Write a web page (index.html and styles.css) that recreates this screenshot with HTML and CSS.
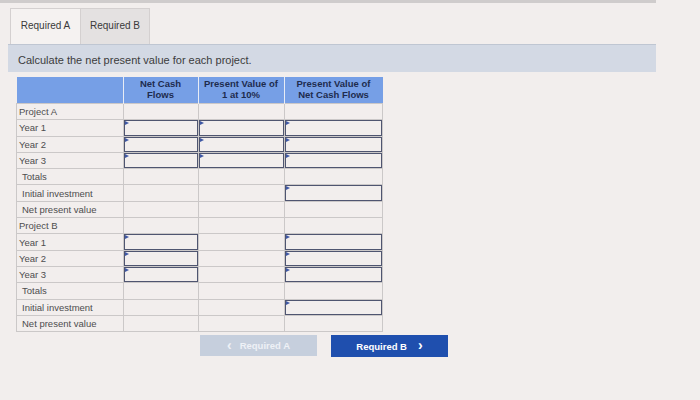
FILE: index.html
```html
<!DOCTYPE html>
<html>
<head>
<meta charset="utf-8">
<link rel="stylesheet" href="styles.css">
</head>
<body>
<div class="topbar"></div>
<div class="page">
  <div class="tabs">
    <div class="tab active">Required A</div>
    <div class="tab">Required B</div>
  </div>
  <div class="instr">Calculate the net present value for each project.</div>
  <table class="grid">
    <thead>
      <tr>
        <th class="lbl"></th>
        <th class="c1">Net Cash<br>Flows</th>
        <th class="c2">Present Value of<br>1 at 10%</th>
        <th class="c3">Present Value of<br>Net Cash Flows</th>
      </tr>
    </thead>
    <tbody>
      <tr><td class="lbl">Project A</td><td></td><td></td><td></td></tr>
      <tr><td class="lbl">Year 1</td><td class="in"><span></span></td><td class="in"><span></span></td><td class="in"><span></span></td></tr>
      <tr><td class="lbl">Year 2</td><td class="in"><span></span></td><td class="in"><span></span></td><td class="in"><span></span></td></tr>
      <tr><td class="lbl">Year 3</td><td class="in"><span></span></td><td class="in"><span></span></td><td class="in"><span></span></td></tr>
      <tr><td class="lbl ind">Totals</td><td></td><td></td><td></td></tr>
      <tr><td class="lbl ind">Initial investment</td><td></td><td></td><td class="in"><span></span></td></tr>
      <tr><td class="lbl ind">Net present value</td><td></td><td></td><td></td></tr>
      <tr><td class="lbl">Project B</td><td></td><td></td><td></td></tr>
      <tr><td class="lbl">Year 1</td><td class="in"><span></span></td><td></td><td class="in"><span></span></td></tr>
      <tr><td class="lbl">Year 2</td><td class="in"><span></span></td><td></td><td class="in"><span></span></td></tr>
      <tr><td class="lbl">Year 3</td><td class="in"><span></span></td><td></td><td class="in"><span></span></td></tr>
      <tr><td class="lbl ind">Totals</td><td></td><td></td><td></td></tr>
      <tr><td class="lbl ind">Initial investment</td><td></td><td></td><td class="in"><span></span></td></tr>
      <tr><td class="lbl ind">Net present value</td><td></td><td></td><td></td></tr>
    </tbody>
  </table>
  <div class="nav">
    <button class="btn prev"><i class="chev">&lsaquo;</i>Required A</button>
    <button class="btn next">Required B<i class="chev r">&rsaquo;</i></button>
  </div>
</div>
</body>
</html>
```
FILE: styles.css
```css
html, body {
  margin: 0;
  padding: 0;
  background: #f2eeed;
  font-family: "Liberation Sans", Arial, sans-serif;
  width: 700px;
  height: 400px;
  overflow: hidden;
}
.topbar {
  width: 656px;
  height: 3px;
  background: #cfcccc;
}
.page {
  padding: 5px 0 0 8px;
  width: 648px;
}
.tabs {
  display: flex;
  padding-left: 2px;
}
.tab {
  box-sizing: border-box;
  height: 36px;
  width: 70px;
  font-size: 10px;
  color: #3a3a3a;
  display: flex;
  align-items: center;
  justify-content: center;
  border: 1px solid #d4d0d0;
  border-bottom: none;
  background: #e4e1e1;
  padding-bottom: 2px;
}
.tab.active {
  background: #f5f2f1;
  border-right: none;
}
.instr {
  box-sizing: border-box;
  height: 28px;
  background: #d3d9e4;
  border-top: 1px solid #bfc6d2;
  font-size: 11px;
  color: #3c3c3c;
  padding: 9px 0 0 10px;
}
.grid {
  border-collapse: collapse;
  margin: 5px 0 0 8px;
  table-layout: fixed;
  width: 366px;
}
.grid th {
  background: #769fe6;
  color: #1e2c4e;
  font-size: 9.5px;
  font-weight: bold;
  line-height: 11px;
  height: 24px;
  padding: 0 0 2px;
  border-left: 1px solid #e8ecf5;
  vertical-align: middle;
}
.grid th.lbl { width: 106px; border-left: none; }
.grid th.c1 { width: 74px; }
.grid th.c2 { width: 85px; }
.grid th.c3 { width: 98px; }
.grid td {
  height: 15.3px;
  padding: 0;
  border: 1px solid #cbc8c8;
  font-size: 9.5px;
  color: #4d4d4d;
  position: relative;
}
.grid td.lbl { padding-left: 2px; }
.grid td.ind { padding-left: 5px; }
.grid td.in span {
  position: absolute;
  left: 0;
  top: 0;
  right: 0;
  bottom: 0;
  border: 1.5px solid #4f5570;
}
.grid td.in span::before {
  content: "";
  position: absolute;
  left: 0;
  top: 0;
  border-left: 4px solid #3f58a5;
  border-top: 2px solid transparent;
  border-bottom: 2px solid transparent;
}
.nav {
  display: flex;
  gap: 14px;
  margin: 3px 0 0 192px;
}
.btn {
  width: 117px;
  height: 21px;
  border: none;
  font-family: "Liberation Sans", Arial, sans-serif;
  font-size: 9.5px;
  font-weight: bold;
  color: #fff;
  padding: 0;
  display: flex;
  align-items: center;
  justify-content: center;
}
.chev {
  font-style: normal;
  font-size: 14px;
  line-height: 10px;
  margin-right: 8px;
  position: relative;
  top: -1px;
}
.chev.r {
  margin: 0 0 0 11px;
}
.btn.prev {
  background: #c6cfdd;
  color: #eef1f6;
}
.btn.next {
  background: #1f4fae;
  height: 22px;
}
```
